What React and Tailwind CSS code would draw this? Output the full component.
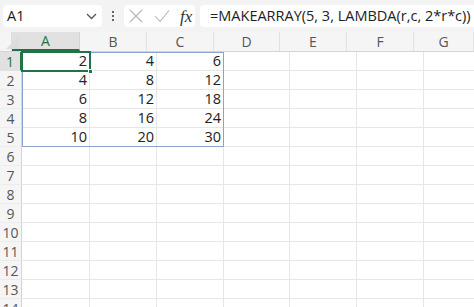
import React from "react";

const cols = [
  { l: "A", w: 68 },
  { l: "B", w: 67 },
  { l: "C", w: 67 },
  { l: "D", w: 66 },
  { l: "E", w: 67 },
  { l: "F", w: 67 },
  { l: "G", w: 60 },
];

const data = [
  [2, 4, 6],
  [4, 8, 12],
  [6, 12, 18],
  [8, 16, 24],
  [10, 20, 30],
];

const rows = Array.from({ length: 14 }, (_, i) => i + 1);

export default function App() {
  const font = { fontFamily: '"Open Sans", "Noto Sans", sans-serif' };
  return (
    <div className="w-[474px] h-[307px] overflow-hidden bg-white relative" style={font}>
      {/* toolbar */}
      <div className="h-[32px] bg-[#f3f3f3] flex items-start pt-[5px] pl-[3px]">
        <div className="w-[99px] h-[22px] bg-white rounded-[4px] flex items-center justify-between pl-[4px] pr-[4px]">
          <span className="text-[14.5px] text-[#222] leading-none">A1</span>
          <svg width="11" height="7" viewBox="0 0 11 7" className="mr-[1px]">
            <path d="M1 1 L5.5 5.5 L10 1" stroke="#555" strokeWidth="1.3" fill="none" />
          </svg>
        </div>
        <div className="w-[22px] h-[22px] flex flex-col items-center justify-center gap-[2px]">
          <div className="w-[2px] h-[2px] bg-[#666]" />
          <div className="w-[2px] h-[2px] bg-[#666]" />
          <div className="w-[2px] h-[2px] bg-[#666]" />
        </div>
        <div className="w-[71px] h-[22px] bg-white rounded-[4px] flex items-center pl-[5px]">
          <svg width="14" height="14" viewBox="0 0 14 14">
            <path d="M1 1 L13 13 M13 1 L1 13" stroke="#b5b5b5" strokeWidth="1.1" fill="none" />
          </svg>
          <svg width="16" height="14" viewBox="0 0 16 14" className="ml-[11px]">
            <path d="M1 7 L6 12.5 L15 1.5" stroke="#b5b5b5" strokeWidth="1.1" fill="none" />
          </svg>
          <span
            className="ml-[10px] text-[17px] italic text-[#333] leading-none"
            style={{ fontFamily: '"Liberation Serif", "DejaVu Serif", serif' }}
          >
            fx
          </span>
        </div>
        <div className="ml-[5px] flex-1 h-[22px] bg-white rounded-l-[4px] flex items-center pl-[10px]">
          <span className="text-[14.5px] text-[#222] leading-none whitespace-nowrap">
            =MAKEARRAY(5, 3, LAMBDA(r,c, 2*r*c))
          </span>
        </div>
      </div>

      {/* header row */}
      <div className="flex h-[20px] bg-[#f5f5f5] border-b border-[#d4d4d4]">
        <div className="w-[22px] h-full relative border-r border-[#dcdcdc]">
          <svg width="22" height="20" viewBox="0 0 22 20" className="absolute inset-0">
            <path d="M19 4 L19 17 L6 17 Z" fill="#dcdcdc" />
          </svg>
        </div>
        {cols.map((c, i) => (
          <div
            key={c.l}
            style={{ width: c.w }}
            className={
              i === 0
                ? "h-full flex items-center justify-center bg-[#e1e1e1] text-[#217346] text-[14px] border-r border-[#d4d4d4] border-b-2 border-b-[#217346] shrink-0"
                : "h-full flex items-center justify-center text-[#555] text-[14px] border-r border-[#e1e1e1] shrink-0"
            }
          >
            {c.l}
          </div>
        ))}
      </div>

      {/* rows */}
      <div className="relative">
        {rows.map((r) => (
          <div key={r} className="flex h-[19px]">
            <div
              className={
                r === 1
                  ? "w-[22px] h-full bg-[#e1e1e1] text-[#217346] text-[14px] flex items-center justify-center border-r-2 border-[#217346] border-b border-b-[#e1e1e1] shrink-0"
                  : "w-[22px] h-full bg-[#f5f5f5] text-[#555] text-[14px] flex items-center justify-center border-r border-[#d4d4d4] border-b border-b-[#ececec] shrink-0"
              }
            >
              {r}
            </div>
            {cols.map((c, ci) => (
              <div
                key={c.l}
                style={{ width: c.w }}
                className="h-full border-r border-b border-[#e6e6e6] flex items-center justify-end pr-[2px] text-[14.5px] text-[#222] shrink-0"
              >
                {r <= 5 && ci < 3 ? data[r - 1][ci] : ""}
              </div>
            ))}
          </div>
        ))}

        {/* spill range border */}
        <div className="absolute left-[22px] top-0 w-[202px] h-[95px] border border-[#8aa4d2] pointer-events-none" />
        {/* active cell */}
        <div className="absolute left-[21px] top-[-1px] w-[70px] h-[21px] border-2 border-[#217346] pointer-events-none" />
        <div className="absolute left-[88px] top-[17px] w-[5px] h-[5px] bg-[#217346] border border-white pointer-events-none" />
      </div>
    </div>
  );
}
